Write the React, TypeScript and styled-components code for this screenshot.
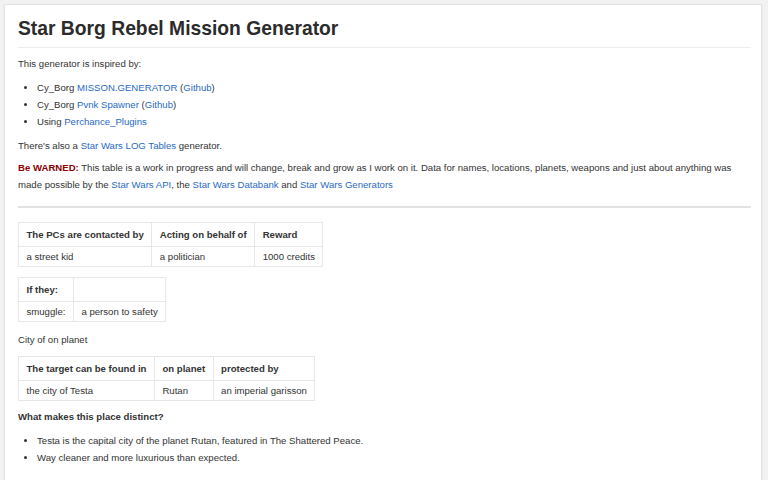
import React from "react";
import styled, { createGlobalStyle } from "styled-components";

const GlobalStyle = createGlobalStyle`
  html, body {
    margin: 0;
    padding: 0;
    background: #f2f2f2;
  }
  body {
    font-family: "Liberation Sans", Arial, sans-serif;
    color: #333;
  }
`;

const Page = styled.div`
  padding: 4px 6px 6px 4px;
`;

const Card = styled.main`
  box-sizing: border-box;
  min-height: 470px;
  background: #fff;
  border: 1px solid #e2e2e2;
  box-shadow: 0 1px 2px rgba(0, 0, 0, 0.06);
  padding: 8px 10px 8px 13px;
  font-size: 9.6px;
  line-height: 17px;
`;

const Title = styled.h1`
  margin: 0 0 7px;
  padding: 4px 0 6px;
  font-size: 19.3px;
  line-height: 24px;
  font-weight: bold;
  color: #2b2b2b;
  border-bottom: 1px solid #eee;
`;

const Para = styled.p<{ $before?: number; $after?: number }>`
  margin: ${(p) => p.$before ?? 0}px 0 ${(p) => p.$after ?? 7}px;
`;

const List = styled.ul`
  margin: 0 0 7px;
  padding-left: 19px;
`;

const Link = styled.a`
  color: #2a6ac4;
  text-decoration: none;
`;

const Warn = styled.b`
  color: #8b0000;
`;

const Rule = styled.hr`
  border: 0;
  border-top: 2px solid #e2e2e2;
  margin: 13px 0 14px;
`;

const Table = styled.table`
  border-collapse: collapse;
  margin-bottom: 10px;
  font-size: 9.6px;

  th,
  td {
    border: 1px solid #e6e6e6;
    padding: 2px 7.5px;
    line-height: 16px;
    text-align: left;
  }
  td {
    line-height: 15px;
  }
  th {
    padding: 4px 7.5px 3px;
    font-weight: bold;
  }
`;

const Heading = styled.p`
  margin: -3px 0 7px;
  font-weight: bold;
`;

export default function App() {
  return (
    <>
      <GlobalStyle />
      <Page>
        <Card>
          <Title>Star Borg Rebel Mission Generator</Title>
          <Para>This generator is inspired by:</Para>
          <List>
            <li>
              Cy_Borg <Link href="#">MISSON.GENERATOR</Link> (<Link href="#">Github</Link>)
            </li>
            <li>
              Cy_Borg <Link href="#">Pvnk Spawner</Link> (<Link href="#">Github</Link>)
            </li>
            <li>
              Using <Link href="#">Perchance_Plugins</Link>
            </li>
          </List>
          <Para>
            There's also a <Link href="#">Star Wars LOG Tables</Link> generator.
          </Para>
          <Para $before={-2}>
            <Warn>Be WARNED:</Warn> This table is a work in progress and will change, break and
            grow as I work on it. Data for names, locations, planets, weapons and just about
            anything was made possible by the <Link href="#">Star Wars API</Link>, the{" "}
            <Link href="#">Star Wars Databank</Link> and <Link href="#">Star Wars Generators</Link>
          </Para>
          <Rule />
          <Table>
            <thead>
              <tr>
                <th>The PCs are contacted by</th>
                <th>Acting on behalf of</th>
                <th>Reward</th>
              </tr>
            </thead>
            <tbody>
              <tr>
                <td>a street kid</td>
                <td>a politician</td>
                <td>1000 credits</td>
              </tr>
            </tbody>
          </Table>
          <Table>
            <thead>
              <tr>
                <th>If they:</th>
                <th></th>
              </tr>
            </thead>
            <tbody>
              <tr>
                <td>smuggle:</td>
                <td>a person to safety</td>
              </tr>
            </tbody>
          </Table>
          <Para $before={-1} $after={8}>
            City of on planet
          </Para>
          <Table>
            <thead>
              <tr>
                <th>The target can be found in</th>
                <th>on planet</th>
                <th>protected by</th>
              </tr>
            </thead>
            <tbody>
              <tr>
                <td>the city of Testa</td>
                <td>Rutan</td>
                <td>an imperial garisson</td>
              </tr>
            </tbody>
          </Table>
          <Heading>What makes this place distinct?</Heading>
          <List>
            <li>Testa is the capital city of the planet Rutan, featured in The Shattered Peace.</li>
            <li>Way cleaner and more luxurious than expected.</li>
          </List>
        </Card>
      </Page>
    </>
  );
}
